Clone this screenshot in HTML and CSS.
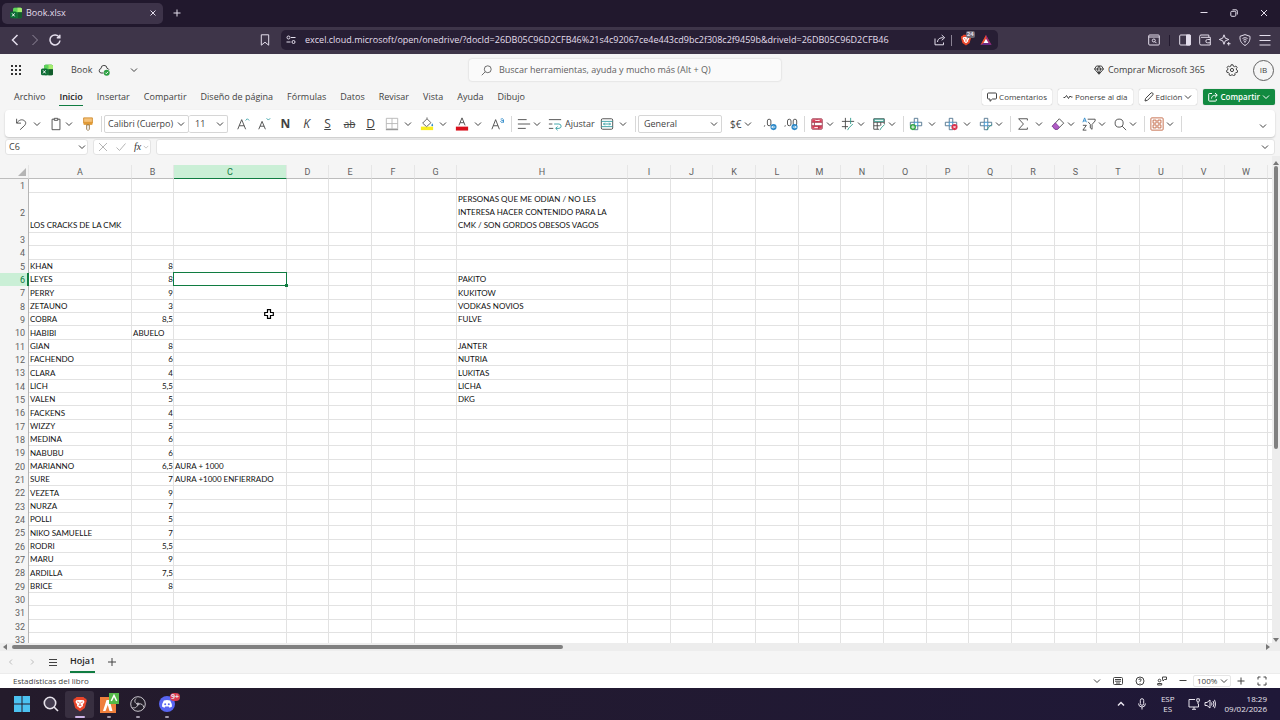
FILE: index.html
```html
<!DOCTYPE html>
<html lang="es">
<head>
    <meta charset="UTF-8">
    <meta name="viewport" content="width=device-width, initial-scale=1.0">
    <title>Book.xlsx</title>
    <link rel="stylesheet" href="styles.css">
</head>
<body>
    <!-- Iconos compartidos -->
    <svg class="sprite" aria-hidden="true">
        <symbol id="chevron" viewBox="0 0 8 8"><path d="M1 2.500 4 5.500 7 2.500"/></symbol>
        <symbol id="excel" viewBox="0 0 16 16">
            <rect x="4" y="1" width="12" height="14" rx="2" fill="#1f8a3f"/>
            <path d="M6 1h8a2 2 0 0 1 2 2v4H4V3a2 2 0 0 1 2-2z" fill="#5fd35b"/>
            <path d="M10 1h4a2 2 0 0 1 2 2v4h-6z" fill="#a4ec6f"/>
            <path d="M10 7h6v6a2 2 0 0 1-2 2h-4z" fill="#125c2c"/>
            <rect x="0" y="6" width="9" height="9" rx="2" fill="#0c6b34"/>
            <path d="M2.800 8.500l3.400 4M6.200 8.500l-3.400 4" stroke="#fff" stroke-width="1.300"/>
        </symbol>
        <symbol id="search" viewBox="0 0 16 16"><circle cx="7" cy="7" r="4.600"/><path d="M10.500 10.500 15 15"/></symbol>
        <symbol id="cross" viewBox="0 0 16 16"><path d="M6 1.500h4V6h4.500v4H10v4.500H6V10H1.500V6H6z" stroke="#4a6f8a"/><path d="M6 6h4v4H6z" stroke="#2b88c8"/></symbol>
        <symbol id="brave" viewBox="0 0 16 16">
            <path d="M4.500 1h7l1.500 1.600 1.200.2.600 2.200-.5 1.500-1.500 5.600L8 15.400l-4.800-3.300L1.700 6.500 1.200 5l.6-2.200L3 2.600z" fill="#e8452a"/>
            <path d="M4.200 4.300 6.500 4h3l2.300.3.7 1.700-1.700 2.600.2 1.400L8 12.300 5 10l.2-1.400L3.500 6z" fill="#fff"/>
            <path d="M5.300 6l1.500.4M10.700 6l-1.500.4M8 6.500v2.500M6.500 9.800 8 9.100l1.500.7" stroke="#e8452a" stroke-width=".9" fill="none"/>
        </symbol>
    </svg>

    <header class="tabstrip">
        <div class="tab">
            <svg class="icon12"><use href="#excel"/></svg>
            <span>Book.xlsx</span>
            <button class="bare" aria-label="Cerrar pestaña"><svg class="line icon8" viewBox="0 0 8 8"><path d="M1.500 1.500l5 5M6.500 1.500l-5 5"/></svg></button>
        </div>
        <button class="bare new-tab" aria-label="Nueva pestaña"><svg class="line icon8" viewBox="0 0 8 8"><path d="M4 .5v7M.5 4h7"/></svg></button>
        <div class="window-buttons">
            <button class="bare" aria-label="Minimizar"><svg class="line icon8" viewBox="0 0 8 8"><path d="M.5 3.500h7"/></svg></button>
            <button class="bare" aria-label="Restaurar"><svg class="line icon8" viewBox="0 0 8 8"><rect x=".8" y="2.300" width="5" height="5" rx="1"/><path d="M2.500.8h3.500a1.300 1.300 0 0 1 1.300 1.300v3.400"/></svg></button>
            <button class="bare" aria-label="Cerrar"><svg class="line icon8" viewBox="0 0 8 8"><path d="M1 1l6 6M7 1l-6 6"/></svg></button>
        </div>
    </header>

    <nav class="navbar">
        <div class="nav-left">
            <button class="bare" aria-label="Atrás"><svg class="line bold icon12" viewBox="0 0 12 12"><path d="M8.500 1 3.500 6l5 5"/></svg></button>
            <button class="bare dim" aria-label="Adelante"><svg class="line icon12" viewBox="0 0 12 12"><path d="M3.500 1l5 5-5 5"/></svg></button>
            <button class="bare" aria-label="Recargar"><svg class="line bold icon12" viewBox="0 0 12 12"><path d="M10.300 3.300A5 5 0 1 0 11 6.500M10.800.8v3H7.800"/></svg></button>
        </div>
        <button class="bare bookmark" aria-label="Marcador"><svg class="line icon12" viewBox="0 0 12 12"><path d="M2.300.8h7.400v10.400L6 8.200l-3.700 3z"/></svg></button>
        <div class="urlbar">
            <svg class="line icon10" viewBox="0 0 10 10"><circle cx="2.500" cy="2.500" r="1.500"/><path d="M5 2.500h4.500M.5 7h4"/><circle cx="7.500" cy="7" r="1.500"/></svg>
            <input type="text" aria-label="Dirección" value="excel.cloud.microsoft/open/onedrive/?docId=26DB05C96D2CFB46%21s4c92067ce4e443cd9bc2f308c2f9459b&amp;driveId=26DB05C96D2CFB46">
            <svg class="line icon12" viewBox="0 0 12 12"><path d="M1 4.500v6.300h8.500V8.500M3.500 8c.3-3 2-4.300 6-4.300M7.700 1l3 2.700-3 2.600"/></svg>
            <span class="url-line"></span>
            <span class="shield">
                <svg class="icon12"><use href="#brave"/></svg>
                <b>24</b>
            </span>
            <svg class="icon12" viewBox="0 0 12 12"><path d="M6 1 .5 11h11z" fill="#6a2a86"/><path d="M6 1v4L3.500 9 .5 11z" fill="#f04e23"/><path d="M6 1l5.500 10-3-2L6 5z" fill="#a52a6c"/><path d="M6 4.700 8.500 9h-5z" fill="#fff"/></svg>
        </div>
        <div class="nav-right">
            <svg class="line icon12" viewBox="0 0 12 12"><rect x=".7" y="1" width="10.600" height="10" rx="1"/><path d="M.7 3h10.600"/><circle cx="5.800" cy="6.500" r="1.500"/><path d="M7 7.700 8.500 9.200"/></svg>
            <span class="url-line dark"></span>
            <svg class="line icon12" viewBox="0 0 12 12"><rect x=".7" y="1" width="10.600" height="10" rx="1"/><path d="M7.500 1h3.800v10H7.500z" fill="#e4deec"/></svg>
            <svg class="line icon12" viewBox="0 0 12 12"><path d="M9.800 3.300V1H2a1.300 1.300 0 0 0-1.300 1.300V9.700A1.300 1.300 0 0 0 2 11h9.300V3.300H2M11.300 5.500H8.500a1.600 1.600 0 0 0 0 3.300h2.800"/></svg>
            <svg class="line icon12" viewBox="0 0 12 12"><path d="M5 .8 6.300 4.200 9.800 5.500 6.300 6.800 5 10.300 3.700 6.800.3 5.500 3.700 4.200zM9.700 8v3.500M8 9.700h3.500"/></svg>
            <svg class="line icon12" viewBox="0 0 12 12"><path d="M6 .6 11 2.300c.3 4-1 7-5 9.200C2 9.300.7 6.300 1 2.300zM3.500 4.500c1.700-1 3.300-1 5 0M4.300 6.200c1-.7 2.400-.7 3.400 0"/><circle cx="6" cy="7.800" r=".5"/></svg>
            <svg class="line icon12" viewBox="0 0 12 12"><path d="M.5 1.500h11M.5 6.500h11M.5 11h11"/></svg>
        </div>
    </nav>

    <div class="titlebar">
        <div class="title-left">
            <svg class="icon12 waffle" viewBox="0 0 12 12"><path d="M1 1h2v2H1zM5 1h2v2H5zM9 1h2v2H9zM1 5h2v2H1zM5 5h2v2H5zM9 5h2v2H9zM1 9h2v2H1zM5 9h2v2H5zM9 9h2v2H9z"/></svg>
            <svg class="icon12 logo"><use href="#excel"/></svg>
            <span class="doc-name">Book</span>
            <svg class="line icon12" viewBox="0 0 12 12"><path d="M5.500 9H3a2.300 2.300 0 0 1 0-4.500A3 3 0 0 1 9 4.300c1 .1 1.700.6 2 1.400"/><circle cx="8.700" cy="8.700" r="3" fill="#2ea043" stroke="none"/><path d="M7.300 8.700l1 1 1.800-1.900" stroke="#fff"/></svg>
            <button class="bare doc-menu" aria-label="Opciones del documento"><svg class="line icon8"><use href="#chevron"/></svg></button>
        </div>
        <label class="search">
            <svg class="line icon12 flip"><use href="#search"/></svg>
            <input type="search" placeholder="Buscar herramientas, ayuda y mucho más (Alt + Q)" aria-label="Buscar">
        </label>
        <div class="title-right">
            <a href="#"><svg class="line icon10" viewBox="0 0 10 10"><path d="M2.500 1h5L9.500 4 5 9.300.5 4zM.5 4h9M3.300 4 5 9l1.700-5L5 1z"/></svg>Comprar Microsoft 365</a>
            <button class="bare" aria-label="Configuración"><svg class="line icon12" viewBox="0 0 12 12"><circle cx="6" cy="6" r="1.600"/><path d="M5 .8h2l.4 1.400 1.200.5 1.300-.7 1.200 1.500-.8 1.200.2 1.300 1.200.6-.5 1.900-1.500.1-.8 1 .2 1.400-1.800.6L6 10.500l-1.100 1.100-1.800-.6.2-1.400-.8-1L1 8.500.500 6.600l1.200-.6.2-1.300L1.100 3.500 2.300 2l1.300.7 1.200-.5z"/></svg></button>
            <button class="avatar">IB</button>
        </div>
    </div>

    <div class="menubar">
        <nav class="menu">
            <a href="#">Archivo</a>
            <a href="#" class="current">Inicio</a>
            <a href="#">Insertar</a>
            <a href="#">Compartir</a>
            <a href="#">Diseño de página</a>
            <a href="#">Fórmulas</a>
            <a href="#">Datos</a>
            <a href="#">Revisar</a>
            <a href="#">Vista</a>
            <a href="#">Ayuda</a>
            <a href="#">Dibujo</a>
        </nav>
        <div class="menu-actions">
            <button><svg class="line icon10" viewBox="0 0 10 10"><path d="M1.500 1h7q1 0 1 1v4q0 1-1 1H5.500L3 9.300V7H1.500q-1 0-1-1V2q0-1 1-1z"/></svg>Comentarios</button>
            <button><svg class="line icon10" viewBox="0 0 10 10"><path d="M.5 5.500h1.500L3.500 3.500 5.500 6.500 7 4l1 1h1.500"/></svg>Ponerse al día</button>
            <button><svg class="line icon10" viewBox="0 0 10 10"><path d="M1 9l.6-2.600L7 1q.9-.7 1.600 0t.3 1.800L3.500 8.300z"/></svg>Edición<svg class="line icon8"><use href="#chevron"/></svg></button>
            <button class="share"><svg class="line icon10" viewBox="0 0 10 10"><path d="M4 1.500H1.500q-.8 0-.8.8v6q0 .8.8.8h6q.8 0 .8-.8V7M3.500 6.500C3.700 4 5 3.200 9 3.200M7 1l2.300 2.200L7 5.400"/></svg>Compartir<svg class="line icon8"><use href="#chevron"/></svg></button>
        </div>
    </div>

    <div class="ribbon">
        <button class="split wide" aria-label="Deshacer"><svg class="line" viewBox="0 0 16 16"><path d="M3 2v5h5M3 7c3-4 6-4.500 8.500-3s2.500 4 0 6.300L7 14.500"/></svg><svg class="line icon8"><use href="#chevron"/></svg></button>
        <button class="split" aria-label="Pegar"><svg class="line" viewBox="0 0 16 16"><path d="M6 2.500H3.500v12h9v-12H10M6 1.500h4v2.300H6z"/></svg><svg class="line icon8"><use href="#chevron"/></svg></button>
        <button class="tool" aria-label="Copiar formato"><svg viewBox="0 0 16 16"><path d="M3 1h10v6H3z" fill="#f5c27a" stroke="#d08a2c"/><path d="M3 5.500h10v3.500H3z" fill="#e09a35"/><path d="M6.500 9h3v5l-1.500 1.500L6.500 14z" fill="#fff" stroke="#8a6a3a"/></svg></button>
        <span class="sep"></span>
        <label class="pick font-name"><select aria-label="Fuente"><option>Calibri (Cuerpo)</option></select><svg class="line icon8"><use href="#chevron"/></svg></label>
        <label class="pick font-size"><select aria-label="Tamaño"><option>11</option></select><svg class="line icon8"><use href="#chevron"/></svg></label>
        <div class="group">
            <button class="tool" aria-label="Aumentar fuente"><svg class="line" viewBox="0 0 16 16"><path d="M2 14 6.500 3 11 14M3.700 10h5.600"/><path d="M11 4l2-2 2 2" stroke="#2b9aa0"/></svg></button>
            <button class="tool" aria-label="Disminuir fuente"><svg class="line" viewBox="0 0 16 16"><path d="M2 14 5.800 5 9.600 14M3.500 10.500h4.600"/><path d="M11 1.500l2 2 2-2" stroke="#2b9aa0"/></svg></button>
        </div>
        <div class="group letters">
            <button class="tool strong">N</button>
            <button class="tool italic">K</button>
            <button class="tool under">S</button>
        </div>
        <div class="group letters">
            <button class="tool strike">ab</button>
            <button class="tool double">D</button>
        </div>
        <button class="split wide" aria-label="Bordes"><svg viewBox="0 0 16 16" fill="none" stroke="#b5b5b5"><path d="M1.500 1.500h13v12h-13zM8 1.500v12M1.500 7.500h13"/><path d="M1 14.500h14" stroke="#777"/></svg><svg class="line icon8"><use href="#chevron"/></svg></button>
        <button class="split wide" aria-label="Relleno"><svg viewBox="0 0 16 16"><path d="M1 11h14v4H1z" fill="#f8ee22"/><path d="M3 7l5-5 4.500 4.500-5 4.500zM8 2V.5" fill="#fff" stroke="#555"/><path d="M14 7q2 3 0 3.500Q12 10 14 7z" fill="#2b88c8"/></svg><svg class="line icon8"><use href="#chevron"/></svg></button>
        <button class="split wide" aria-label="Color de fuente"><svg class="line" viewBox="0 0 16 16"><path d="M4.500 9.500 8 1l3.500 8.500M5.800 6.500h4.400"/><path d="M1 11h14v4.500H1z" fill="#d9101c" stroke="none"/></svg><svg class="line icon8"><use href="#chevron"/></svg></button>
        <button class="tool" aria-label="Superíndice"><svg class="line" viewBox="0 0 16 16"><path d="M1 14 5.300 3l4.300 11M2.700 10h5.200"/><path d="M11 2.500q2.700-1.300 3.300.5V6.500M14.300 4q-3-.2-3.300 1.300 .6 2 3.300.2" stroke="#2b88c8"/></svg></button>
        <span class="sep"></span>
        <button class="split" aria-label="Alinear"><svg class="line" viewBox="0 0 16 16"><path d="M1 3h10M1 8h14M1 13h9"/></svg><svg class="line icon8"><use href="#chevron"/></svg></button>
        <button class="wrap"><svg class="line" viewBox="0 0 16 16"><path d="M1 3h14M1 8h4M1 13h5"/><path d="M7 8h5.500q2.500.3 2.500 2.500T12.500 13H9M11 10.800 8.800 13l2.200 2.200" stroke="#2b9aa0"/></svg>Ajustar</button>
        <button class="split wide" aria-label="Combinar"><svg class="line" viewBox="0 0 16 16"><rect x="1.500" y="2" width="13" height="12" rx="1.500"/><path d="M1.500 5h13M1.500 11h13M4 8h8M5.500 6.500 4 8l1.500 1.500M10.500 6.500 12 8l-1.500 1.500" stroke="#2b9aa0"/></svg><svg class="line icon8"><use href="#chevron"/></svg></button>
        <span class="sep"></span>
        <label class="pick number-format"><select aria-label="Formato de número"><option>General</option></select><svg class="line icon8"><use href="#chevron"/></svg></label>
        <button class="split money">$€<svg class="line icon8"><use href="#chevron"/></svg></button>
        <button class="tool" aria-label="Menos decimales"><svg class="line" viewBox="0 0 16 16"><path d="M2 9.500 1.500 11"/><rect x="5" y="2.500" width="4" height="7.500" rx="2"/><circle cx="12" cy="11.500" r="3.500" fill="#2b88c8" stroke="none"/><path d="M14 11.500h-4M11.500 10 10 11.500l1.500 1.500" stroke="#fff"/></svg></button>
        <button class="tool" aria-label="Más decimales"><svg class="line" viewBox="0 0 16 16"><path d="M1.500 9.500 1 11"/><rect x="4" y="2.500" width="4" height="7.500" rx="2"/><rect x="10.500" y="2.500" width="4" height="7.500" rx="2"/><circle cx="12" cy="11.500" r="3.500" fill="#2b88c8" stroke="none"/><path d="M10 11.500h4M12.500 10l1.500 1.500-1.500 1.500" stroke="#fff"/></svg></button>
        <span class="sep"></span>
        <button class="split" aria-label="Formato condicional"><svg class="line" viewBox="0 0 16 16"><path d="M2.500 2.500h11V6h-11zM2.500 10h11v3.500h-11z" fill="#e2405c" stroke="none"/><rect x="2" y="2" width="12" height="12" rx="1" stroke="#9c3448"/><path d="M2 6h12M2 10h12M5 6v4M8 2.500V6M10 10v4" stroke="#9c3448"/><path d="M6 4h5M5 12h4" stroke="#fff"/></svg><svg class="line icon8"><use href="#chevron"/></svg></button>
        <button class="split" aria-label="Estilos"><svg class="line" viewBox="0 0 16 16"><path d="M5 1v13M1 5h14M1 11h7" /><path d="M11 1v7M13.500 8 9 12.500 7.500 15" stroke="#2b9a8a"/></svg><svg class="line icon8"><use href="#chevron"/></svg></button>
        <button class="split" aria-label="Tabla"><svg class="line" viewBox="0 0 16 16"><path d="M8 14H2V2h12v6M2 6h12M2 10h7M6 6v8M10 6v4"/><path d="M2.500 2.500h11V5h-11z" stroke="#2b9a8a"/><path d="M14.500 8.500 10.500 12.500 9 15" stroke="#2b9a8a"/></svg><svg class="line icon8"><use href="#chevron"/></svg></button>
        <span class="sep"></span>
        <button class="split wide" aria-label="Insertar celdas"><svg class="line" viewBox="0 0 16 16"><use href="#cross"/><circle cx="4.500" cy="11.500" r="3.500" fill="#35a544" stroke="none"/><path d="M2.500 11.500h4M4.500 9.500v4" stroke="#fff"/></svg><svg class="line icon8"><use href="#chevron"/></svg></button>
        <button class="split wide" aria-label="Eliminar celdas"><svg class="line" viewBox="0 0 16 16"><use href="#cross"/><circle cx="12" cy="11.500" r="3.500" fill="#d9304c" stroke="none"/><path d="M10.700 10.200l2.600 2.600M13.300 10.200l-2.600 2.600" stroke="#fff"/></svg><svg class="line icon8"><use href="#chevron"/></svg></button>
        <button class="split" aria-label="Formato de celdas"><svg class="line" viewBox="0 0 16 16"><use href="#cross"/><path d="M14.500 8.500 10.500 12.500 9 15" stroke="#2b9a8a"/></svg><svg class="line icon8"><use href="#chevron"/></svg></button>
        <span class="sep"></span>
        <button class="split wide" aria-label="Autosuma"><svg class="line" viewBox="0 0 16 16"><path d="M13 4V2H3l5.500 6L3 14h10v-2"/></svg><svg class="line icon8"><use href="#chevron"/></svg></button>
        <button class="split" aria-label="Borrar"><svg class="line" viewBox="0 0 16 16"><path d="M9.500 2 14.500 7 7.500 14H4.500L1.500 10.500z"/><path d="M5 6.700 1.500 10.500l3 3.500h3l2-2.500z" fill="#b05cc4" stroke="#8c3fa5"/></svg><svg class="line icon8"><use href="#chevron"/></svg></button>
        <button class="split" aria-label="Ordenar y filtrar"><svg class="line" viewBox="0 0 16 16"><path d="M1 6 3 1l2 5M1.700 4.500h2.600" stroke="#2b88c8"/><path d="M1 9.500h4L1 15h4M6.500 2.500H15v2L11.500 8.500V14l-2-1.500V8.500L7 5.500"/></svg><svg class="line icon8"><use href="#chevron"/></svg></button>
        <button class="split" aria-label="Buscar y seleccionar"><svg class="line"><use href="#search"/></svg><svg class="line icon8"><use href="#chevron"/></svg></button>
        <span class="sep"></span>
        <button class="split" aria-label="Complementos"><svg viewBox="0 0 16 16" fill="none" stroke="#c0603c"><rect x="1" y="1" width="14" height="14" rx="1"/><path d="M3.500 3.500h3.500v3.500H3.500zM9 3.500h3.500v3.500H9zM3.500 9h3.500v3.500H3.500zM9 9h3.500v3.500H9z"/></svg><svg class="line icon8"><use href="#chevron"/></svg></button>
        <span class="sep"></span>
        <button class="bare ribbon-toggle" aria-label="Opciones de la cinta"><svg class="line icon8"><use href="#chevron"/></svg></button>
    </div>

    <div class="formulabar">
        <label class="pick cell-name"><select aria-label="Cuadro de nombres"><option>C6</option></select><svg class="line icon8"><use href="#chevron"/></svg></label>
        <div class="fx">
            <svg class="line icon10" viewBox="0 0 10 10"><path d="M1 1l8 8M9 1 1 9"/></svg>
            <svg class="line icon10" viewBox="0 0 10 10"><path d="M.5 5.500 3.500 8.500 9.500 1.500"/></svg>
            <i>fx</i>
            <svg class="line icon6"><use href="#chevron"/></svg>
        </div>
        <label class="formula">
            <input type="text" aria-label="Barra de fórmulas">
            <svg class="line icon8"><use href="#chevron"/></svg>
        </label>
    </div>

    <main class="sheet-area">
        <div class="sheet">
            <table id="sheet"></table>
            <svg class="cursor" viewBox="0 0 10 10"><path d="M3.500 .7h3v2.800h2.800v3H6.500v2.800h-3V6.500H.7v-3h2.800z" fill="#fff" stroke="#000" stroke-width="1.200"/></svg>
        </div>
        <div class="vscroll">
            <svg viewBox="0 0 8 6"><path d="M4 1 7 5H1z"/></svg>
            <div class="track"><div class="thumb"></div></div>
            <svg viewBox="0 0 8 6"><path d="M4 5 7 1H1z"/></svg>
        </div>
        <div class="hscroll">
            <svg viewBox="0 0 6 8"><path d="M1 4 5 1v6z"/></svg>
            <div class="track"><div class="thumb"></div></div>
            <svg viewBox="0 0 6 8"><path d="M5 4 1 1v6z"/></svg>
        </div>
    </main>

    <div class="sheet-tabs">
        <button class="bare off" aria-label="Hoja anterior"><svg class="line icon8" viewBox="0 0 8 8"><path d="M5 1.500 2.500 4 5 6.500"/></svg></button>
        <button class="bare off" aria-label="Hoja siguiente"><svg class="line icon8" viewBox="0 0 8 8"><path d="M3 1.500 5.500 4 3 6.500"/></svg></button>
        <button class="bare" aria-label="Todas las hojas"><svg class="line icon8" viewBox="0 0 8 8"><path d="M0 1.500h8M0 4.500h8M0 7.500h8"/></svg></button>
        <button class="sheet-tab">Hoja1</button>
        <button class="bare" aria-label="Nueva hoja"><svg class="line icon8" viewBox="0 0 8 8"><path d="M4 0v8M0 4h8"/></svg></button>
    </div>

    <footer class="status">
        <span>Estadísticas del libro</span>
        <div class="status-right">
            <svg class="line icon8"><use href="#chevron"/></svg>
            <svg class="line icon10" viewBox="0 0 10 10"><rect x=".5" y="1.500" width="9" height="7" rx="1"/><path d="M2 3.500h6M2 5.200h6M3 7h4"/></svg>
            <svg class="line icon10" viewBox="0 0 10 10"><circle cx="5" cy="5" r="4"/><path d="M3.800 4q.2-1.300 1.300-1.200T6.200 4Q6 4.800 5 5.300V6M5 7v.7"/></svg>
            <svg class="line icon10" viewBox="0 0 10 10"><circle cx="2.500" cy="4.500" r="1.300"/><path d="M.7 9V7.500h4V9zM5.500 1h4v2.500H7.500L6 5V3.500h-.5z"/></svg>
            <button class="bare" aria-label="Alejar"><svg class="line icon8" viewBox="0 0 8 8"><path d="M.5 3.500h7"/></svg></button>
            <label class="pick zoom"><select aria-label="Zoom"><option>100%</option></select><svg class="line icon8"><use href="#chevron"/></svg></label>
            <button class="bare" aria-label="Acercar"><svg class="line icon8" viewBox="0 0 8 8"><path d="M4 .5v7M.5 4h7"/></svg></button>
            <svg class="line icon10" viewBox="0 0 10 10"><path d="M1 3.500V1h2.500M6.500 1H9v2.500M9 6.500V9H6.500M3.500 9H1V6.500"/></svg>
        </div>
    </footer>

    <div class="taskbar">
        <div class="apps">
            <button aria-label="Inicio"><svg viewBox="0 0 16 16"><path d="M0 0h7.500v7.500H0zM8.500 0H16v7.500H8.500zM0 8.500h7.500V16H0zM8.500 8.500H16V16H8.500z" fill="#4cc2f1"/></svg></button>
            <button aria-label="Buscar"><svg viewBox="0 0 16 16" fill="none" stroke="#e6e2ea" stroke-width="1.600"><circle cx="7" cy="7" r="5.700" fill="#453d50"/><path d="M11 11l4 4"/></svg></button>
            <button class="open active" aria-label="Brave"><svg><use href="#brave"/></svg></button>
            <button class="open" aria-label="FiveM"><svg class="big" viewBox="0 0 20 20"><path d="M1 4h16v16H1z" fill="#ef7f3c"/><path d="M7.500 7h3L13.500 18h-3L8.800 12 6.500 18H4z" fill="#fff"/><path d="M10 0h10v11H10z" fill="#54b948"/><path d="M12.300 8 15 2.500 17.700 8" fill="none" stroke="#fff" stroke-width="1.500"/></svg></button>
            <button class="open" aria-label="OBS"><svg viewBox="0 0 16 16" fill="none" stroke="#c9c5cd"><circle cx="8" cy="8" r="7.300" fill="#241f2a"/><path d="M8 8C4.500 7.500 4 4.500 6 2.500M8 8c3.500-.8 5.500 1 5.800 3.500M8 8c-1 3.800-3.500 4.500-5.500 3.500"/><circle cx="8" cy="8" r="1"/></svg></button>
            <button class="open discord" aria-label="Discord"><svg viewBox="0 0 16 16"><circle cx="8" cy="8" r="8" fill="#5865f2"/><path d="M4.800 4.500q3.200-1 6.400 0 1.800 3 1.800 6-1.300 1-2.500 1.200l-.8-1.200H6.300l-.8 1.200Q4.300 11.500 3 10.500q0-3 1.800-6z" fill="#fff"/><circle cx="6.200" cy="8.200" r="1" fill="#5865f2"/><circle cx="9.800" cy="8.200" r="1" fill="#5865f2"/></svg><b>9+</b></button>
        </div>
        <div class="tray">
            <svg class="line bold icon8" viewBox="0 0 8 8"><path d="M1 5.500 4 2.500 7 5.500"/></svg>
            <svg class="line icon12" viewBox="0 0 12 12"><rect x="4.300" y=".7" width="3.400" height="6.600" rx="1.700"/><path d="M2.500 5.500q.2 3.500 3.500 3.500t3.500-3.500M6 9v2.500"/></svg>
            <span class="lang">ESP<br>ES</span>
            <span class="devices">
                <svg class="line icon12" viewBox="0 0 12 12"><path d="M7 1.500H1v7.500h9.500V6M4 11.300h4M6 9v2M8.800.8h2.500v2.500q-1.200 1.500-2.500 0zM10 4v2"/></svg>
                <svg class="line icon12" viewBox="0 0 12 12"><path d="M1 4.500h2L6 2v8L3 7.500H1zM7.500 4.500q1 1.500 0 3M9 3q2 3 0 6M10.500 1.800q2.500 4.200 0 8.400"/></svg>
            </span>
            <span class="clock">18:29<br>09/02/2026</span>
        </div>
    </div>

    <script src="script.js"></script>
</body>
</html>
```
FILE: styles.css
```css
* {
    box-sizing: border-box;
}

body {
    margin: 0;
    height: 100vh;
    display: flex;
    flex-direction: column;
    overflow: hidden;
    background-color: #f5f5f5;
    color: #424242;
    font-family: "Open Sans", "Noto Sans", sans-serif;
    font-size: 9px;
    line-height: 14px;
}

button, input, select {
    font: inherit;
    color: inherit;
    margin: 0;
    padding: 0;
    border: none;
    background: none;
    outline: none;
}

a {
    color: inherit;
    text-decoration: none;
}

svg {
    display: block;
    flex: none;
}

.sprite {
    display: none;
}

.line {
    fill: none;
    stroke: currentColor;
    stroke-width: 1;
}

.bold {
    stroke-width: 1.5;
}

.icon6 { width: 6px; height: 6px; }
.icon8 { width: 8px; height: 8px; }
.icon10 { width: 10px; height: 10px; }
.icon12 { width: 12px; height: 12px; }

.bare {
    display: flex;
    align-items: center;
    justify-content: center;
}

/* Navegador */
.tabstrip {
    display: flex;
    align-items: center;
    height: 27px;
    padding: 0 8px 1px 2px;
    background-color: #21182d;
    color: #e4deec;
}

.tab {
    display: flex;
    align-items: center;
    gap: 4px;
    width: 161px;
    height: 21px;
    padding: 0 6px 0 8px;
    border-radius: 5px;
    background-color: #3d3349;
}

.tab span {
    flex: 1;
}

.new-tab {
    margin-left: 10px;
}

.window-buttons {
    display: flex;
    gap: 22px;
    margin-left: auto;
    padding-right: 4px;
}

.navbar {
    display: flex;
    align-items: center;
    height: 27px;
    padding-bottom: 1px;
    background-color: #3e3549;
    color: #e4deec;
}

.nav-left {
    display: flex;
    gap: 8px;
    padding-left: 9px;
}

.dim {
    opacity: 0.5;
}

.bookmark {
    margin-left: 198px;
}

.urlbar {
    display: flex;
    align-items: center;
    gap: 8px;
    width: 56%;
    height: 20px;
    margin-left: 10px;
    padding: 0 6px 0 5px;
    border-radius: 5px;
    background-color: #271e34;
}

.urlbar input {
    flex: 1;
    min-width: 0;
}

.urlbar .icon10 {
    margin-right: 1px;
}

.url-line {
    width: 1px;
    height: 11px;
    margin-left: -3px;
    background-color: #8a8294;
}

.url-line.dark {
    margin-left: 0;
    background-color: #231a2f;
}

.shield {
    position: relative;
}

.shield b {
    position: absolute;
    top: -3px;
    left: 6px;
    padding: 0 1px;
    border-radius: 2px;
    background-color: #6e6a74;
    font-size: 6px;
    line-height: 7px;
}

.nav-right {
    display: flex;
    flex: 1;
    justify-content: flex-end;
    align-items: center;
    gap: 8px;
    padding-right: 9px;
}

.nav-right .dark {
    margin: 0 1px;
}

/* Encabezado de Excel */
.titlebar {
    display: grid;
    grid-template-columns: 1fr 312px 1fr;
    align-items: center;
    height: 32px;
}

.title-left, .title-right {
    display: flex;
    align-items: center;
}

.title-left {
    padding-left: 10px;
}

.waffle {
    fill: #333;
}

.logo {
    margin-left: 19px;
    margin-right: 18px;
}

.doc-name {
    margin-right: 6px;
}

.doc-menu {
    margin-left: 20px;
}

.search {
    display: flex;
    align-items: center;
    gap: 6px;
    height: 22px;
    margin: 0 0 1px -15px;
    width: 312px;
    padding: 0 12px;
    border-radius: 3px;
    background-color: #fafafa;
    box-shadow: 0 0 2px rgba(0, 0, 0, 0.2);
}

.search input {
    flex: 1;
    min-width: 0;
    appearance: none;
}

.search input::placeholder {
    color: #616161;
    opacity: 1;
}

.flip {
    transform: scaleX(-1);
}

.title-right {
    justify-content: flex-end;
    padding-right: 6px;
    gap: 15px;
}

.title-right a {
    display: flex;
    align-items: center;
    gap: 4px;
    margin-right: 6px;
}

.avatar {
    width: 21px;
    height: 21px;
    border: 1px solid #616161;
    border-radius: 50%;
    font-size: 8px;
}

.menubar {
    display: flex;
    justify-content: space-between;
    align-items: center;
    height: 24px;
    padding: 0 5px 3px 14px;
}

.menu {
    display: flex;
    gap: 14px;
}

.menu a {
    padding: 3px 0 1px;
    border-bottom: 1px solid transparent;
}

.menu .current {
    border-bottom-color: #107c41;
    color: #242424;
    font-weight: 600;
}

.menu-actions {
    display: flex;
    gap: 6px;
}

.menu-actions button {
    display: flex;
    align-items: center;
    gap: 2px;
    height: 16px;
    padding: 0 5px;
    border-radius: 2px;
    background-color: #fff;
    box-shadow: 0 0 1px #999;
    font-size: 8px;
}

.menu-actions .share {
    background-color: #128a40;
    color: #fff;
    font-weight: 600;
}

/* Cinta */
.ribbon {
    display: flex;
    align-items: center;
    height: 27px;
    margin: 0 5px;
    padding: 0 8px 0 6px;
    border-radius: 4px;
    background-color: #fff;
    box-shadow: 0 1px 2px rgba(0, 0, 0, 0.2);
}

.group {
    display: flex;
    margin-right: 1px;
}

.font-size + .group {
    margin-left: 4px;
}

.tool, .split, .wrap {
    display: flex;
    align-items: center;
    flex: none;
    height: 20px;
}

.tool {
    width: 21px;
    justify-content: center;
}

.split {
    width: 31px;
    gap: 2px;
    padding-left: 3px;
}

.split.wide {
    width: 35px;
    gap: 5px;
}

.wrap {
    gap: 3px;
    width: 52px;
    padding-left: 3px;
}

.tool svg, .split svg:first-child, .wrap svg {
    width: 14px;
    height: 14px;
}

.split.money {
    width: 32px;
    margin-left: 5px;
    gap: 3px;
    font-size: 10px;
}

.split.money svg {
    width: 8px;
    height: 8px;
}

.sep {
    flex: none;
    width: 1px;
    height: 16px;
    margin: 0 2px 0 3px;
    background-color: #d8d8d8;
}

.letters .tool {
    font-size: 12px;
}

.strong { font-weight: 700; }
.italic { font-style: italic; }
.under { text-decoration: underline; }
.strike { text-decoration: line-through; }
.double { text-decoration: underline; }

.letters .strike {
    font-size: 10px;
}

.pick {
    position: relative;
    flex: none;
    height: 18px;
    border: 1px solid #d6d6d6;
    border-radius: 2px;
    background-color: #fff;
}

.pick select {
    display: block;
    width: 100%;
    height: 100%;
    padding-left: 3px;
    appearance: none;
}

.pick svg {
    position: absolute;
    top: 50%;
    right: 3px;
    margin-top: -4px;
    pointer-events: none;
}

.font-name {
    width: 85px;
}

.font-size {
    width: 39px;
    border-left: none;
}

.font-size select {
    padding-left: 6px;
}

.number-format {
    width: 84px;
}

.number-format select {
    padding-left: 5px;
}

.ribbon-toggle {
    margin-left: auto;
    padding-top: 5px;
}

.formulabar {
    display: flex;
    gap: 5px;
    height: 16px;
    margin: 2px 5px 1px;
}

.formulabar .pick, .fx, .formula {
    height: 16px;
    border: 1px solid #e4e4e4;
    border-radius: 3px;
    background-color: #fff;
}

.cell-name {
    width: 83px;
}

.formulabar .pick svg {
    right: 1px;
}

.fx {
    display: flex;
    align-items: center;
    gap: 8px;
    width: 58px;
    padding-left: 4px;
    color: #b5b5b5;
}

.fx i {
    color: #333;
    font-family: "Liberation Serif", serif;
    font-size: 10px;
}

.fx .icon6 {
    margin-left: -6px;
}

.formula {
    display: flex;
    flex: 1;
    align-items: center;
    padding: 0 5px;
}

.formula input {
    flex: 1;
}

/* Hoja */
.sheet-area {
    flex: 1;
    min-height: 0;
    display: grid;
    grid-template-columns: minmax(0, 1fr) 8px;
    grid-template-rows: minmax(0, 1fr) 8px;
}

.sheet {
    position: relative;
    overflow: hidden;
    padding-top: 9px;
}

table {
    table-layout: fixed;
    width: 0;
    border-spacing: 0;
    color: #111;
    font-family: Lato, sans-serif;
    font-size: 8px;
    line-height: 12px;
}

.col-head { width: 29px; }
.col-a { width: 103px; }
.col-b { width: 42px; }
.col-c { width: 113px; }
.col-h { width: 171px; }
.col-s { width: 42px; }
.col-m { width: 43px; }

th {
    height: 13px;
    padding: 0;
    background-color: #f5f5f5;
    border-right: 1px solid #e6e6e6;
    color: #616161;
    font-family: Roboto, sans-serif;
    font-size: 9px;
    font-weight: 400;
}

thead th {
    height: 14px;
    border-bottom: 1px solid #bdbdbd;
}

tbody th {
    padding-right: 3px;
    border-right-color: #b5b5b5;
    text-align: right;
}

.corner {
    position: relative;
}

.corner svg {
    position: absolute;
    right: 2px;
    bottom: 2px;
    fill: #b5b5b5;
}

th.selected {
    background-color: #caefd6;
    color: #107c41;
}

thead .selected {
    border-bottom-color: #107c41;
}

tbody .selected {
    border-right: 2px solid #107c41;
    padding-right: 2px;
}

td {
    height: 13px;
    padding: 0 1px;
    border-right: 1px solid #e2e2e2;
    border-bottom: 1px solid #e2e2e2;
    background-color: #fff;
    vertical-align: bottom;
    white-space: nowrap;
}

tbody tr:nth-child(3n+1) td {
    height: 14px;
}

.tall td {
    height: 40px;
    line-height: 13px;
}

.number {
    padding-right: 0;
    text-align: right;
}

.multiline {
    padding-right: 10px;
    white-space: normal;
}

.active-cell {
    position: relative;
}

.active-cell::before {
    content: "";
    position: absolute;
    inset: -1px;
    border: 1px solid #107c41;
}

.active-cell::after {
    content: "";
    position: absolute;
    right: -2px;
    bottom: -2px;
    width: 3px;
    height: 3px;
    background-color: #107c41;
}

.cursor {
    position: absolute;
    left: 264px;
    top: 153px;
    width: 10px;
    height: 10px;
}

.vscroll, .hscroll {
    display: flex;
    align-items: center;
    background-color: #ededed;
    fill: #777;
}

.vscroll {
    flex-direction: column;
    padding-top: 4px;
}

.vscroll svg {
    width: 8px;
    height: 6px;
}

.hscroll {
    grid-column: 1 / -1;
    padding: 0 9px 0 2px;
}

.hscroll svg {
    width: 6px;
    height: 8px;
}

.track {
    flex: 1;
}

.thumb {
    border-radius: 2px;
    background-color: #808080;
}

.vscroll .thumb {
    width: 4px;
    height: 60%;
}

.vscroll .track {
    width: 4px;
}

.hscroll .track {
    padding-left: 4px;
}

.hscroll .thumb {
    width: 44%;
    height: 4px;
}

.sheet-tabs {
    display: flex;
    align-items: center;
    gap: 13px;
    height: 22px;
    padding-left: 7px;
}

.off {
    color: #bdbdbd;
}

.sheet-tab {
    height: 22px;
    border-bottom: 2px solid #107c41;
    color: #242424;
    font-weight: 600;
}

.status {
    display: flex;
    align-items: center;
    justify-content: space-between;
    height: 15px;
    padding: 0 13px;
    background-color: #fff;
    border-top: 1px solid #ececec;
    font-size: 8px;
}

.status-right {
    display: flex;
    align-items: center;
    gap: 12px;
}

.pick.zoom {
    width: 38px;
    height: 12px;
    margin: 0 -6px;
    border-color: #e6e6e6;
    line-height: 10px;
}

.zoom svg {
    right: 2px;
}

/* Barra de tareas */
.taskbar {
    display: flex;
    justify-content: space-between;
    height: 32px;
    padding: 0 13px 0 7px;
    background: linear-gradient(90deg, #241b2b, #1f1838);
    color: #e8e4ee;
}

.apps {
    display: flex;
    align-items: center;
}

.apps button {
    position: relative;
    display: flex;
    align-items: center;
    justify-content: center;
    width: 29px;
    height: 27px;
    border-radius: 3px;
}

.apps svg {
    width: 16px;
    height: 16px;
}

.apps .big {
    width: 20px;
    height: 20px;
    margin-bottom: 3px;
}

.apps .active {
    background-color: #382f40;
}

.open::after {
    content: "";
    position: absolute;
    bottom: 0;
    width: 4px;
    height: 2px;
    border-radius: 1px;
    background-color: #a29aaa;
}

.active::after {
    width: 10px;
    background-color: #cdb4e8;
}

.discord b {
    position: absolute;
    top: 2px;
    right: 1px;
    padding: 0 1px;
    border-radius: 4px;
    background-color: #d83a4e;
    font-size: 7px;
    line-height: 8px;
}

.tray {
    display: flex;
    align-items: center;
    font-size: 8px;
    line-height: 10px;
}

.tray .icon12 {
    margin-left: 11px;
}

.lang {
    margin: 0 13px;
    text-align: center;
}

.tray .devices {
    display: flex;
    gap: 4px;
    margin-right: 9px;
}

.devices .icon12 {
    margin-left: 0;
}

.clock {
    text-align: right;
}
```
FILE: script.js
```javascript
// La última columna queda sin letra: cierra la hoja por la derecha
const columns = 'ABCDEFGHIJKLMNOPQRSTUVW'.split('').concat('');
const totalRows = 33;
const activeColumn = 'C';
const activeRow = 6;

const widths = {
    A: 'a', B: 'b', C: 'c', D: 's', E: 'm', F: 'm', G: 's', H: 'h'
};

const cells = {
    A2: 'LOS CRACKS DE LA CMK',
    H2: 'PERSONAS QUE ME ODIAN / NO LES INTERESA HACER CONTENIDO PARA LA CMK / SON GORDOS OBESOS VAGOS',
    C20: 'AURA + 1000',
    C21: 'AURA +1000 ENFIERRADO',
    H6: 'PAKITO', H7: 'KUKITOW', H8: 'VODKAS NOVIOS', H9: 'FULVE',
    H11: 'JANTER', H12: 'NUTRIA', H13: 'LUKITAS', H14: 'LICHA', H15: 'DKG'
};

// Nombre y nota, desde la fila 5
const people = [
    ['KHAN', '8'], ['LEYES', '8'], ['PERRY', '9'], ['ZETAUNO', '3'], ['COBRA', '8,5'],
    ['HABIBI', 'ABUELO'], ['GIAN', '8'], ['FACHENDO', '6'], ['CLARA', '4'], ['LICH', '5,5'],
    ['VALEN', '5'], ['FACKENS', '4'], ['WIZZY', '5'], ['MEDINA', '6'], ['NABUBU', '6'],
    ['MARIANNO', '6,5'], ['SURE', '7'], ['VEZETA', '9'], ['NURZA', '7'], ['POLLI', '5'],
    ['NIKO SAMUELLE', '7'], ['RODRI', '5,5'], ['MARU', '9'], ['ARDILLA', '7,5'], ['BRICE', '8']
];

people.forEach(function (person, i) {
    cells['A' + (i + 5)] = person[0];
    cells['B' + (i + 5)] = person[1];
});

function columnClass(name, i) {
    // Las columnas después de la H alternan 43, 42 y 43
    return 'col-' + (widths[name] || ((i - 8) % 3 === 1 ? 's' : 'm'));
}

function buildHead() {
    let html = '<colgroup><col class="col-head">';
    columns.forEach(function (name, i) {
        html += '<col class="' + columnClass(name, i) + '">';
    });
    html += '</colgroup><thead><tr><th class="corner"><svg width="8" height="8" viewBox="0 0 8 8"><path d="M8 0v8H0z"/></svg></th>';
    columns.forEach(function (name) {
        html += '<th' + (name === activeColumn ? ' class="selected"' : '') + '>' + name + '</th>';
    });
    return html + '</tr></thead>';
}

function buildBody() {
    let html = '<tbody>';
    for (let row = 1; row <= totalRows; row++) {
        html += '<tr' + (row === 2 ? ' class="tall"' : '') + '>';
        html += '<th' + (row === activeRow ? ' class="selected"' : '') + '>' + row + '</th>';
        columns.forEach(function (name) {
            const text = cells[name + row] || '';
            let cls = '';
            if (name === activeColumn && row === activeRow) cls = 'active-cell';
            else if (/^[\d,]+$/.test(text)) cls = 'number';
            else if (name + row === 'H2') cls = 'multiline';
            html += '<td' + (cls ? ' class="' + cls + '"' : '') + '>' + text + '</td>';
        });
        html += '</tr>';
    }
    return html + '</tbody>';
}

document.getElementById('sheet').innerHTML = buildHead() + buildBody();
```
